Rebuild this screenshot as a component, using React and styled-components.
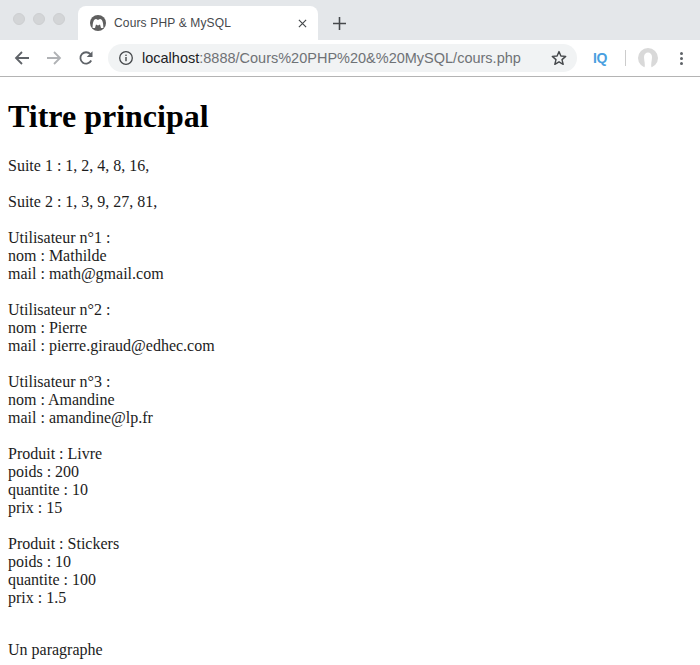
import React from 'react';
import styled, { createGlobalStyle } from 'styled-components';

const GlobalStyle = createGlobalStyle`
    html, body {
        margin: 0;
        padding: 0;
        background: #fff;
    }
`;

const TabStrip = styled.div`
    height: 40px;
    background: #e4e7ea;
    display: flex;
    align-items: flex-end;
    box-sizing: border-box;
    padding-left: 13px;
`;

const Lights = styled.div`
    display: flex;
    gap: 8px;
    align-self: flex-start;
    margin-top: 13px;
    width: 65px;
`;

const Light = styled.span`
    width: 12px;
    height: 12px;
    border-radius: 50%;
    background: #d3d5d7;
    border: 1px solid #cdcfd1;
    box-sizing: border-box;
`;

const Tab = styled.div`
    width: 240px;
    height: 34px;
    background: #fff;
    border-radius: 8px 8px 0 0;
    display: flex;
    align-items: center;
    padding: 0 11px 0 12px;
    box-sizing: border-box;
`;

const TabTitle = styled.span`
    font: 12px "Liberation Sans", Arial, sans-serif;
    color: #45484b;
    margin-left: 8px;
    flex: 1;
    letter-spacing: 0.15px;
`;

const NewTab = styled.div`
    margin-left: 15px;
    height: 34px;
    display: flex;
    align-items: center;
`;

const Toolbar = styled.div`
    height: 37px;
    background: #fff;
    border-bottom: 1px solid #b4b4b4;
    box-sizing: border-box;
    display: flex;
    align-items: center;
    padding-left: 14px;
`;

const NavButton = styled.div`
    width: ${props => props.$width || 32}px;
    height: 20px;
    display: flex;
    align-items: center;
    justify-content: flex-start;
`;

const Omnibox = styled.div`
    width: 469px;
    height: 28px;
    background: #f1f3f4;
    border-radius: 14px;
    display: flex;
    align-items: center;
    padding: 0 10px;
    box-sizing: border-box;
`;

const Url = styled.span`
    font: 14.5px "Liberation Sans", Arial, sans-serif;
    color: #6f7276;
    margin-left: 8px;
    flex: 1;
    white-space: nowrap;
`;

const Host = styled.span`
    color: #202124;
`;

const Extensions = styled.div`
    display: flex;
    align-items: center;
    margin-left: 16px;
`;

const IQ = styled.span`
    font: bold 14px "Liberation Sans", Arial, sans-serif;
    color: #4a9fe0;
    width: 32px;
    letter-spacing: -0.3px;
`;

const Separator = styled.span`
    width: 1px;
    height: 16px;
    background: #ccc;
    margin-right: 12px;
`;

const Menu = styled.div`
    margin-left: 22px;
    display: flex;
    flex-direction: column;
    gap: 2px;
`;

const Dot = styled.span`
    width: 3px;
    height: 3px;
    border-radius: 50%;
    background: #5f6368;
`;

const Page = styled.div`
    margin: 0 8px;
    font-family: "Liberation Serif", "Times New Roman", serif;
    font-size: 16px;
    color: #1c1c1c;
    display: flow-root;
`;

const Title = styled.h1`
    font-size: 32px;
    font-weight: bold;
    color: #000;
    margin: 21.44px 0;
`;

const Block = styled.div`
    line-height: 18px;
    margin-bottom: 18px;
`;

const Paragraph = styled.p`
    line-height: 18px;
    margin: 34px 0 16px;
`;

const blocks = [
    ['Suite 1 : 1, 2, 4, 8, 16,'],
    ['Suite 2 : 1, 3, 9, 27, 81,'],
    ['Utilisateur n°1 :', 'nom : Mathilde', 'mail : math@gmail.com'],
    ['Utilisateur n°2 :', 'nom : Pierre', 'mail : pierre.giraud@edhec.com'],
    ['Utilisateur n°3 :', 'nom : Amandine', 'mail : amandine@lp.fr'],
    ['Produit : Livre', 'poids : 200', 'quantite : 10', 'prix : 15'],
    ['Produit : Stickers', 'poids : 10', 'quantite : 100', 'prix : 1.5'],
];

function Favicon() {
    return (
        <svg width="16" height="16" viewBox="0 0 16 16">
            <circle cx="8" cy="8" r="8" fill="#5f5f5f" />
            <path d="M2.6 13 C2.6 8 3.5 4 6 4 C7 4 7.4 5 8 5 C8.6 5 9 4 10 4 C12.5 4 13.4 8 13.4 13 L11 13 L10 9.5 L8 10.5 L6 9.5 L5 13 Z" fill="#fff" />
        </svg>
    );
}

function Arrow({ color, flip }) {
    return (
        <svg width="16" height="16" viewBox="0 0 16 16" style={flip ? { transform: 'scaleX(-1)' } : undefined}>
            <path d="M15 8 H2 M8 2 L2 8 L8 14" fill="none" stroke={color} strokeWidth="1.8" />
        </svg>
    );
}

function Reload() {
    return (
        <svg width="16" height="16" viewBox="0 0 16 16">
            <path d="M13.2 10.5 A5.7 5.7 0 1 1 12.4 4.2" fill="none" stroke="#5f6368" strokeWidth="1.8" />
            <path d="M14.5 1.2 V7 H8.7 Z" fill="#5f6368" />
        </svg>
    );
}

function Info() {
    return (
        <svg width="16" height="16" viewBox="0 0 16 16">
            <circle cx="8" cy="8" r="6.3" fill="none" stroke="#45484b" strokeWidth="1.3" />
            <rect x="7.3" y="7" width="1.4" height="4.2" fill="#45484b" />
            <rect x="7.3" y="4.6" width="1.4" height="1.4" fill="#45484b" />
        </svg>
    );
}

function Star() {
    return (
        <svg width="16" height="16" viewBox="0 0 16 16">
            <path d="M8 1.6 L9.9 6 L14.7 6.4 L11 9.6 L12.2 14.3 L8 11.8 L3.8 14.3 L5 9.6 L1.3 6.4 L6.1 6 Z" fill="none" stroke="#45484b" strokeWidth="1.4" strokeLinejoin="round" />
        </svg>
    );
}

function Avatar() {
    return (
        <svg width="20" height="20" viewBox="0 0 20 20">
            <circle cx="10" cy="10" r="10" fill="#d9d9d9" />
            <path d="M6.5 20 C7.5 16 6 13 6 9 C6 6 8 4.5 10 4.5 C12 4.5 14 6 14 9 C14 13 12.5 16 13.5 20 Z" fill="#fff" />
        </svg>
    );
}

function Cross({ size, color, width }) {
    return (
        <svg width={size} height={size} viewBox="0 0 10 10">
            <path d={size > 10 ? 'M5 0 V10 M0 5 H10' : 'M1 1 L9 9 M9 1 L1 9'} fill="none" stroke={color} strokeWidth={width} />
        </svg>
    );
}

export default function App() {
    return (
        <>
            <GlobalStyle />
            <TabStrip>
                <Lights>
                    <Light />
                    <Light />
                    <Light />
                </Lights>
                <Tab>
                    <Favicon />
                    <TabTitle>Cours PHP &amp; MySQL</TabTitle>
                    <Cross size={9} color="#45484b" width={1.3} />
                </Tab>
                <NewTab>
                    <Cross size={13} color="#45484b" width={1.2} />
                </NewTab>
            </TabStrip>
            <Toolbar>
                <NavButton><Arrow color="#5f6368" /></NavButton>
                <NavButton><Arrow color="#b0b2b5" flip /></NavButton>
                <NavButton $width={30}><Reload /></NavButton>
                <Omnibox>
                    <Info />
                    <Url><Host>localhost</Host>:8888/Cours%20PHP%20&amp;%20MySQL/cours.php</Url>
                    <Star />
                </Omnibox>
                <Extensions>
                    <IQ>IQ</IQ>
                    <Separator />
                    <Avatar />
                    <Menu>
                        <Dot />
                        <Dot />
                        <Dot />
                    </Menu>
                </Extensions>
            </Toolbar>
            <Page>
                <Title>Titre principal</Title>
                {blocks.map((lines) => (
                    <Block key={lines[0]}>
                        {lines.map((line) => (
                            <div key={line}>{line}</div>
                        ))}
                    </Block>
                ))}
                <Paragraph>Un paragraphe</Paragraph>
            </Page>
        </>
    );
}
